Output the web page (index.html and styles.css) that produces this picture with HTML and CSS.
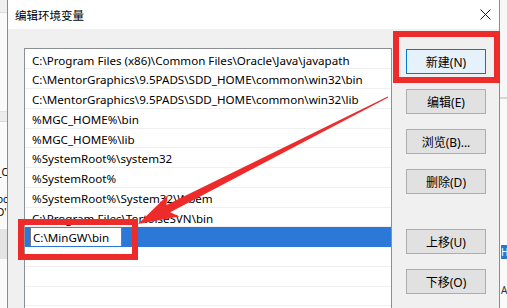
FILE: index.html
```html
<!DOCTYPE html>
<html lang="zh-CN">
<head>
    <meta charset="UTF-8">
    <title>编辑环境变量</title>
    <link rel="stylesheet" href="styles.css">
</head>
<body>
    <div class="desktop">
        <div class="behind behind-left">
            <div class="bl-head"></div>
            <div class="bl-rows"></div>
            <div class="bl-band"></div>
            <div class="bl-text">
                <span>_C</span>
                <span class="bl-gap">oc</span>
                <span class="bl-next">D'</span>
            </div>
            <div class="bl-grey"></div>
        </div>

        <div class="dialog">
            <div class="titlebar">
                <span class="title">编辑环境变量</span>
                <svg class="close" width="11" height="11" viewBox="0 0 11 11">
                    <path d="M0.5 0.5 L10.5 10.5 M10.5 0.5 L0.5 10.5" stroke="#1a1a1a" stroke-width="1" fill="none"/>
                </svg>
            </div>
            <div class="dialog-body">
                <div class="pathlist">
                    <div class="row">C:\Program Files (x86)\Common Files\Oracle\Java\javapath</div>
                    <div class="row">C:\MentorGraphics\9.5PADS\SDD_HOME\common\win32\bin</div>
                    <div class="row">C:\MentorGraphics\9.5PADS\SDD_HOME\common\win32\lib</div>
                    <div class="row">%MGC_HOME%\bin</div>
                    <div class="row">%MGC_HOME%\lib</div>
                    <div class="row">%SystemRoot%\system32</div>
                    <div class="row">%SystemRoot%</div>
                    <div class="row">%SystemRoot%\System32\Wbem</div>
                    <div class="row">C:\Program Files\TortoiseSVN\bin</div>
                    <div class="row row-selected"><span class="editbox">C:\MinGW\bin</span></div>
                    <div class="row"></div>
                    <div class="row"></div>
                    <div class="row"></div>
                </div>
                <div class="actions">
                    <button class="btn btn-default">新建(N)</button>
                    <button class="btn">编辑(E)</button>
                    <button class="btn">浏览(B)...</button>
                    <button class="btn">删除(D)</button>
                    <button class="btn btn-apart">上移(U)</button>
                    <button class="btn">下移(O)</button>
                </div>
            </div>
        </div>

        <div class="behind behind-right">
            <div class="br-head"></div>
            <div class="br-mid"></div>
            <div class="br-pick">H</div>
            <div class="br-text">AP</div>
        </div>

        <!-- red annotations drawn over the screenshot -->
        <div class="mark mark-new"></div>
        <div class="mark mark-edit"></div>
        <svg class="arrow" width="507" height="308" viewBox="0 0 507 308">
            <polygon points="138,224 179.5,216.5 170.2,212.2 388.2,97.4 387.8,96.6 166.4,205.0 167.7,195.3" fill="#ee2b2b"/>
        </svg>
    </div>
</body>
</html>
```

FILE: styles.css
```css
body {
    margin: 0;
    background-color: #f0f0f0;
    font-family: "Noto Sans", "Noto Sans CJK SC", sans-serif;
    color: #000;
    overflow: hidden;
}
.desktop {
    position: relative;
    display: grid;
    grid-template-columns: 7px 493px 7px;
    width: 507px;
    height: 308px;
    overflow: hidden;
}

/* window behind the dialog */
.behind {
    background-color: #fafafa;
    overflow: hidden;
    font-size: 10px;
    white-space: nowrap;
}
.bl-head {
    height: 12px;
    background-color: #f0f0f0;
    border-bottom: 1px solid #dcdcdc;
}
.bl-rows {
    height: 98px;
    border-bottom: 1px solid #e2e2e2;
}
.bl-band {
    height: 9px;
    background-color: #ececec;
    border-bottom: 1px solid #dadada;
}
.bl-text {
    display: flex;
    flex-direction: column;
    padding-top: 45px;
    line-height: 10px;
    margin-left: -3px;
}
.bl-gap {
    margin-top: 17px;
}
.bl-next {
    margin-top: 3px;
}
.bl-grey {
    margin-top: 12px;
    height: 30px;
    background-color: #e4e4e4;
}
.br-head {
    height: 97px;
    background-color: #f7f7f7;
    border-bottom: 2px solid #d6d6d6;
}
.br-mid {
    height: 146px;
}
.br-pick {
    height: 14px;
    background-color: #2a78d6;
    color: #fff;
    line-height: 14px;
    margin-left: 1px;
}
.br-text {
    margin-top: 24px;
    margin-left: 1px;
    color: #333;
}

/* dialog */
.dialog {
    border-left: 1px solid #8c8c8c;
    border-right: 1px solid #8c8c8c;
    background-color: #f0f0f0;
    display: flex;
    flex-direction: column;
}
.titlebar {
    height: 29px;
    flex: none;
    background-color: #fff;
    display: flex;
    align-items: center;
    justify-content: space-between;
    padding: 0 8px 0 7px;
}
.title {
    font-family: "Noto Sans CJK SC", sans-serif;
    font-size: 11.5px;
    padding-top: 1px;
}
.dialog-body {
    display: flex;
    align-items: flex-start;
    gap: 14px;
    padding: 19px 0 0 16px;
}
.pathlist {
    width: 368px;
    height: 300px;
    box-sizing: border-box;
    border: 1px solid #8b8f96;
    background-color: #fff;
    padding-top: 0.5px;
}
.row {
    height: 19.75px;
    box-sizing: border-box;
    border-bottom: 1px solid #f0f0f0;
    padding: 2px 0 0 7px;
    font-size: 11.6px;
    line-height: 17px;
    white-space: nowrap;
    overflow: hidden;
}
.row-selected {
    background-color: #2b78d8;
    border-bottom-color: #2b78d8;
    padding: 0 0 0 5px;
}
.editbox {
    display: block;
    width: 92px;
    height: 19.75px;
    box-sizing: border-box;
    border: 1px solid #7a7a7a;
    background-color: #fff;
    padding: 1px 0 0 2px;
    line-height: 17px;
}
.actions {
    display: flex;
    flex-direction: column;
    width: 80px;
    padding-top: 1px;
}
.btn {
    height: 25px;
    width: 80px;
    box-sizing: border-box;
    margin: 0 0 15px 0;
    padding: 0;
    border: 1px solid #adadad;
    background-color: #e1e1e1;
    font-family: "Noto Sans", "Noto Sans CJK SC", sans-serif;
    font-size: 12px;
    color: #000;
}
.btn-default {
    background-color: #e5f1fb;
    border-color: #0078d7;
}
.btn-apart {
    margin-top: 20px;
}

/* annotations */
.mark {
    position: absolute;
    box-sizing: border-box;
    border: 6px solid #ee2b2b;
}
.mark-new {
    left: 393px;
    top: 31px;
    width: 107px;
    height: 52px;
}
.mark-edit {
    left: 18px;
    top: 219px;
    width: 120px;
    height: 41px;
}
.arrow {
    position: absolute;
    left: 0;
    top: 0;
}
```
